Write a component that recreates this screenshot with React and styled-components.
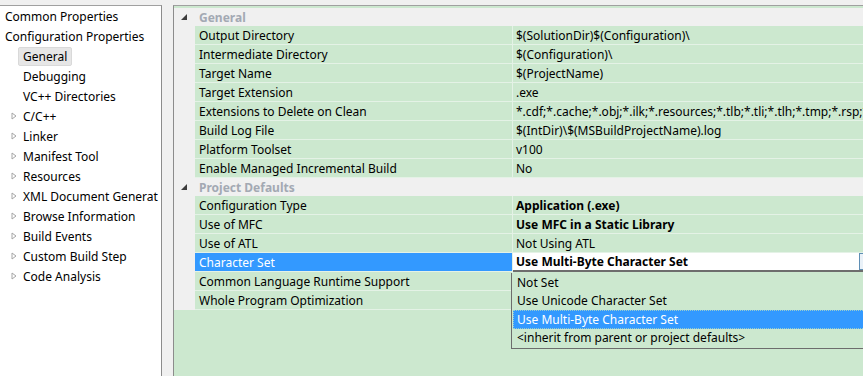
import React from 'react';
import styled, { createGlobalStyle } from 'styled-components';

const GlobalStyle = createGlobalStyle`
  html, body {
    margin: 0;
    padding: 0;
    background: #f0f0f0;
  }
  body {
    font-family: 'Noto Sans', 'Open Sans', sans-serif;
    font-size: 12px;
    color: #000;
  }
`;

const Page = styled.div`
  display: flex;
  gap: 11px;
  height: 376px;
  padding-top: 5px;
  box-sizing: border-box;
  overflow: hidden;
`;

const TreePanel = styled.div`
  width: 162px;
  flex-shrink: 0;
  background: #fff;
  border-top: 1px solid #a0a0a0;
  border-right: 1px solid #8c8c8c;
  box-sizing: border-box;
`;

const TreeItem = styled.div`
  display: flex;
  align-items: center;
  height: 20px;
  padding-left: ${(p) => (p.$level ? 8 : 4)}px;
  white-space: nowrap;
  overflow: hidden;
`;

const Expander = styled.span`
  display: inline-flex;
  width: 14px;
  justify-content: flex-start;
  flex-shrink: 0;
`;

const TreeLabel = styled.span`
  padding: 0 4px;
  margin-left: -4px;
  line-height: 17px;
  border-radius: 2px;
  background: ${(p) => (p.$selected ? '#e6e6e6' : 'transparent')};
  border: 1px solid ${(p) => (p.$selected ? '#d9d9d9' : 'transparent')};
`;

const GridPanel = styled.div`
  flex: 1;
  position: relative;
  display: flex;
  flex-direction: column;
  background: #cce8cf;
  border-top: 1px solid #a0a0a0;
  border-left: 1px solid #8c8c8c;
  padding-top: 2px;
  box-sizing: border-box;
  min-width: 0;
`;

const Row = styled.div`
  display: grid;
  grid-template-columns: 21px 318px 1fr;
  height: 19px;
  flex-shrink: 0;
`;

const Gutter = styled.div`
  background: #f0f0f0;
  display: flex;
  align-items: center;
  justify-content: center;
`;

const CategoryRow = styled.div`
  display: grid;
  grid-template-columns: 21px 1fr;
  height: 18px;
  background: #f0f0f0;
  flex-shrink: 0;
`;

const CategoryLabel = styled.div`
  display: flex;
  align-items: center;
  padding-left: 4px;
  font-weight: bold;
  color: #a3a9b3;
`;

const NameCell = styled.div`
  display: flex;
  align-items: center;
  padding-left: 4px;
  border-bottom: 1px solid #e4f2e6;
  border-right: 1px solid #e4f2e6;
  background: ${(p) => (p.$selected ? '#3399ff' : 'transparent')};
  color: ${(p) => (p.$selected ? '#fff' : '#000')};
  white-space: nowrap;
  overflow: hidden;
`;

const ValueCell = styled.div`
  display: flex;
  align-items: center;
  padding-left: 3px;
  border-bottom: 1px solid #e4f2e6;
  font-weight: ${(p) => (p.$bold ? 'bold' : 'normal')};
  white-space: nowrap;
  overflow: hidden;
`;

const EditCell = styled.div`
  display: flex;
  align-items: center;
  background: #fff;
  border-bottom: 2px solid #6d6d6d;
  position: relative;
  padding-left: 3px;
  font-weight: bold;
  white-space: nowrap;
`;

const DropButton = styled.div`
  position: absolute;
  right: -6px;
  top: 0;
  bottom: 0;
  width: 8px;
  border: 1px solid #5f8fb5;
  background: #e9f1f8;
`;

const Filler = styled.div`
  flex: 1;
`;

const DropList = styled.div`
  position: absolute;
  left: 337px;
  top: 267px;
  width: 360px;
  background: #cce8cf;
  border-left: 1px solid #6d6d6d;
  border-bottom: 1px solid #6d6d6d;
  padding: 0 0 1px 1px;
`;

const DropItem = styled.div`
  height: 18.5px;
  display: flex;
  align-items: center;
  padding-left: 3px;
  box-sizing: border-box;
  background: ${(p) => (p.$active ? '#3399ff' : 'transparent')};
  color: ${(p) => (p.$active ? '#fff' : '#000')};
  border: 1px dotted ${(p) => (p.$active ? '#9cc' : 'transparent')};
  white-space: nowrap;
`;

const OpenArrow = () => (
  <svg width="12" height="12" viewBox="0 0 12 12">
    <path d="M4 3 L8 6 L4 9 Z" fill="none" stroke="#a6a6a6" strokeWidth="1" />
  </svg>
);

const CollapseArrow = () => (
  <svg width="8" height="8" viewBox="0 0 8 8">
    <polygon points="6,1 6,7 0,7" fill="#3c3c3c" />
  </svg>
);

const treeItems = [
  { label: 'Common Properties', level: 0 },
  { label: 'Configuration Properties', level: 0 },
  { label: 'General', level: 1, selected: true },
  { label: 'Debugging', level: 1 },
  { label: 'VC++ Directories', level: 1 },
  { label: 'C/C++', level: 1, children: true },
  { label: 'Linker', level: 1, children: true },
  { label: 'Manifest Tool', level: 1, children: true },
  { label: 'Resources', level: 1, children: true },
  { label: 'XML Document Generat', level: 1, children: true },
  { label: 'Browse Information', level: 1, children: true },
  { label: 'Build Events', level: 1, children: true },
  { label: 'Custom Build Step', level: 1, children: true },
  { label: 'Code Analysis', level: 1, children: true },
];

const generalProps = [
  ['Output Directory', '$(SolutionDir)$(Configuration)\\'],
  ['Intermediate Directory', '$(Configuration)\\'],
  ['Target Name', '$(ProjectName)'],
  ['Target Extension', '.exe'],
  ['Extensions to Delete on Clean', '*.cdf;*.cache;*.obj;*.ilk;*.resources;*.tlb;*.tli;*.tlh;*.tmp;*.rsp;*.p'],
  ['Build Log File', '$(IntDir)\\$(MSBuildProjectName).log'],
  ['Platform Toolset', 'v100'],
  ['Enable Managed Incremental Build', 'No'],
];

// the last two values sit under the open drop-down list
const defaultProps = [
  ['Configuration Type', 'Application (.exe)', true],
  ['Use of MFC', 'Use MFC in a Static Library', true],
  ['Use of ATL', 'Not Using ATL'],
  ['Character Set', 'Use Multi-Byte Character Set', true, true],
  ['Common Language Runtime Support', ''],
  ['Whole Program Optimization', ''],
];

const options = [
  'Not Set',
  'Use Unicode Character Set',
  'Use Multi-Byte Character Set',
  '<inherit from parent or project defaults>',
];

const PropRow = ({ name, value, bold, editing }) => (
  <Row>
    <Gutter />
    <NameCell $selected={editing}>{name}</NameCell>
    {editing ? (
      <EditCell>
        {value}
        <DropButton />
      </EditCell>
    ) : (
      <ValueCell $bold={bold}>{value}</ValueCell>
    )}
  </Row>
);

const Category = ({ title }) => (
  <CategoryRow>
    <Gutter>
      <CollapseArrow />
    </Gutter>
    <CategoryLabel>{title}</CategoryLabel>
  </CategoryRow>
);

export default function App() {
  return (
    <>
      <GlobalStyle />
      <Page>
        <TreePanel>
          {treeItems.map((item) => (
            <TreeItem key={item.label} $level={item.level}>
              {item.level > 0 && <Expander>{item.children && <OpenArrow />}</Expander>}
              <TreeLabel $selected={item.selected}>{item.label}</TreeLabel>
            </TreeItem>
          ))}
        </TreePanel>
        <GridPanel>
          <Category title="General" />
          {generalProps.map(([n, v]) => (
            <PropRow key={n} name={n} value={v} />
          ))}
          <Category title="Project Defaults" />
          {defaultProps.map(([n, v, b, e]) => (
            <PropRow key={n} name={n} value={v} bold={b} editing={e} />
          ))}
          <Filler />
          <DropList>
            {options.map((o, i) => (
              <DropItem key={o} $active={i === 2}>
                {o}
              </DropItem>
            ))}
          </DropList>
        </GridPanel>
      </Page>
    </>
  );
}
